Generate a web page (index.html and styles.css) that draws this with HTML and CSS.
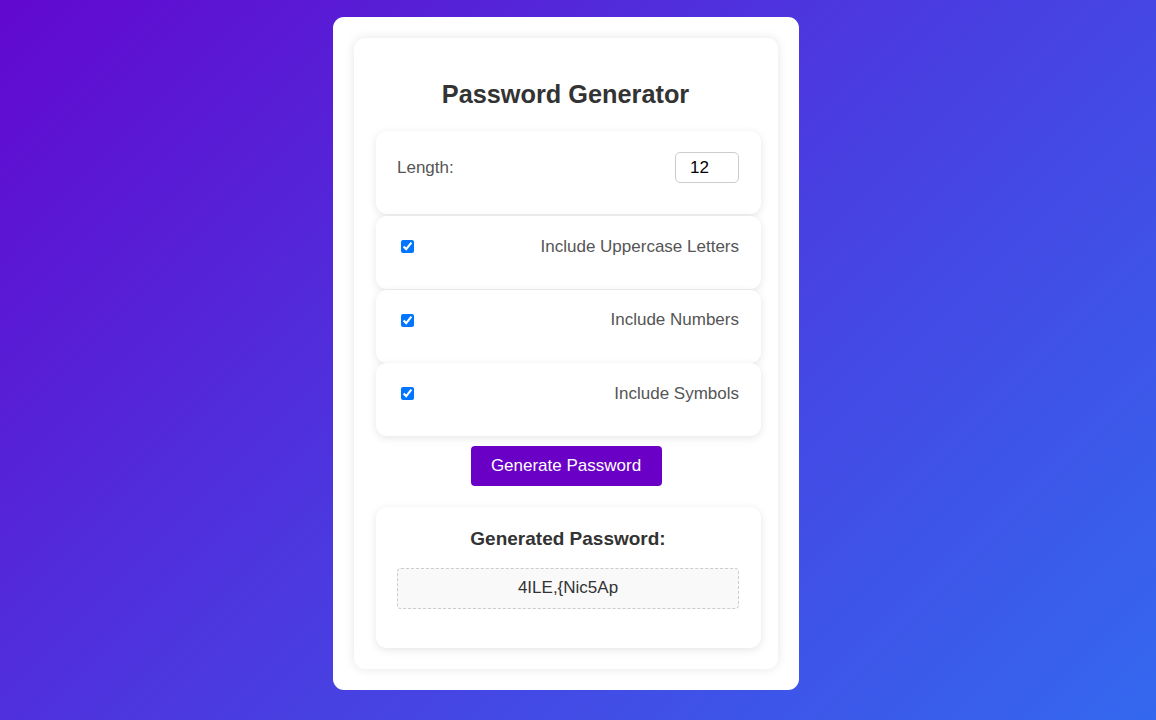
FILE: index.html
```html
<!DOCTYPE html>
<html lang="en">
<head>
<meta charset="utf-8">
<title>Password Generator</title>
<link rel="stylesheet" href="styles.css">
</head>
<body>
  <div class="outer">
    <div class="card">
      <h2 class="title">Password Generator</h2>
      <div class="option option-length">
        <label class="row">
          <span class="label-text">Length:</span>
          <input class="length-input" type="number" value="12">
        </label>
      </div>
      <div class="option">
        <label class="row">
          <input type="checkbox" checked>
          <span class="label-text">Include Uppercase Letters</span>
        </label>
      </div>
      <div class="option">
        <label class="row">
          <input type="checkbox" checked>
          <span class="label-text">Include Numbers</span>
        </label>
      </div>
      <div class="option">
        <label class="row">
          <input type="checkbox" checked>
          <span class="label-text">Include Symbols</span>
        </label>
      </div>
      <div class="actions">
        <button class="generate">Generate Password</button>
      </div>
      <div class="option result">
        <h3 class="result-title">Generated Password:</h3>
        <div class="password">4ILE,{Nic5Ap</div>
      </div>
    </div>
  </div>
</body>
</html>
```

FILE: styles.css
```css
html, body {
  margin: 0;
  padding: 0;
}
body {
  min-height: 720px;
  box-sizing: border-box;
  background: linear-gradient(135deg, #6208cf 0%, #4a3ce0 50%, #3468ef 100%);
  font-family: "Liberation Sans", Arial, sans-serif;
  display: flex;
  justify-content: center;
  align-items: flex-start;
  padding: 17px 24px 0 0;
}
.outer {
  width: 466px;
  box-sizing: border-box;
  background: #fff;
  border-radius: 11px;
  padding: 21px;
}
.card {
  background: #fff;
  border-radius: 11px;
  box-shadow: 0 0 11px rgba(0, 0, 0, 0.1);
  padding: 1px 21px 21px 22px;
}
.title {
  margin: 41px 2px 22px 0;
  text-align: center;
  font-size: 25.3px;
  font-weight: bold;
  color: #333;
  line-height: 29px;
}
.option {
  background: #fff;
  border-radius: 11px;
  box-shadow: 0 2px 9px rgba(0, 0, 0, 0.1);
  padding: 20px 22px 32px 21px;
  margin: 0 -4px 0.5px 0;
}
.option-length {
  padding-top: 21px;
  padding-bottom: 31px;
  margin-bottom: 2px;
}
.row {
  display: flex;
  align-items: center;
  justify-content: space-between;
  font-size: 17px;
  color: #555;
  min-height: 21px;
}
.length-input {
  width: 64px;
  height: 31px;
  box-sizing: border-box;
  border: 1px solid #ccc;
  border-radius: 5px;
  font-family: "Liberation Sans", Arial, sans-serif;
  font-size: 17px;
  color: #000;
  padding: 0 0 0 14px;
  margin: 0;
  -moz-appearance: textfield;
}
.length-input::-webkit-inner-spin-button,
.length-input::-webkit-outer-spin-button {
  -webkit-appearance: none;
  margin: 0;
}
.row input[type="checkbox"] {
  margin: 0 0 0 4px;
  width: 13px;
  height: 13px;
}
.actions {
  display: flex;
  justify-content: center;
  padding: 9px 1px 21px 0;
}
.generate {
  background: #6a00c6;
  color: #fff;
  border: none;
  border-radius: 4px;
  font-family: "Liberation Sans", Arial, sans-serif;
  font-size: 17px;
  padding: 0 20px;
  height: 40px;
  width: 191px;
}
.result {
  padding: 20px 22px 39px 21px;
  margin-bottom: 0;
}
.result-title {
  margin: 0 0 18px;
  text-align: center;
  font-size: 19px;
  line-height: 23px;
  font-weight: bold;
  color: #333;
}
.password {
  background: #f9f9f9;
  border: 1px dashed #ccc;
  border-radius: 4px;
  height: 41px;
  box-sizing: border-box;
  display: flex;
  align-items: center;
  justify-content: center;
  font-size: 17px;
  color: #333;
}
```
